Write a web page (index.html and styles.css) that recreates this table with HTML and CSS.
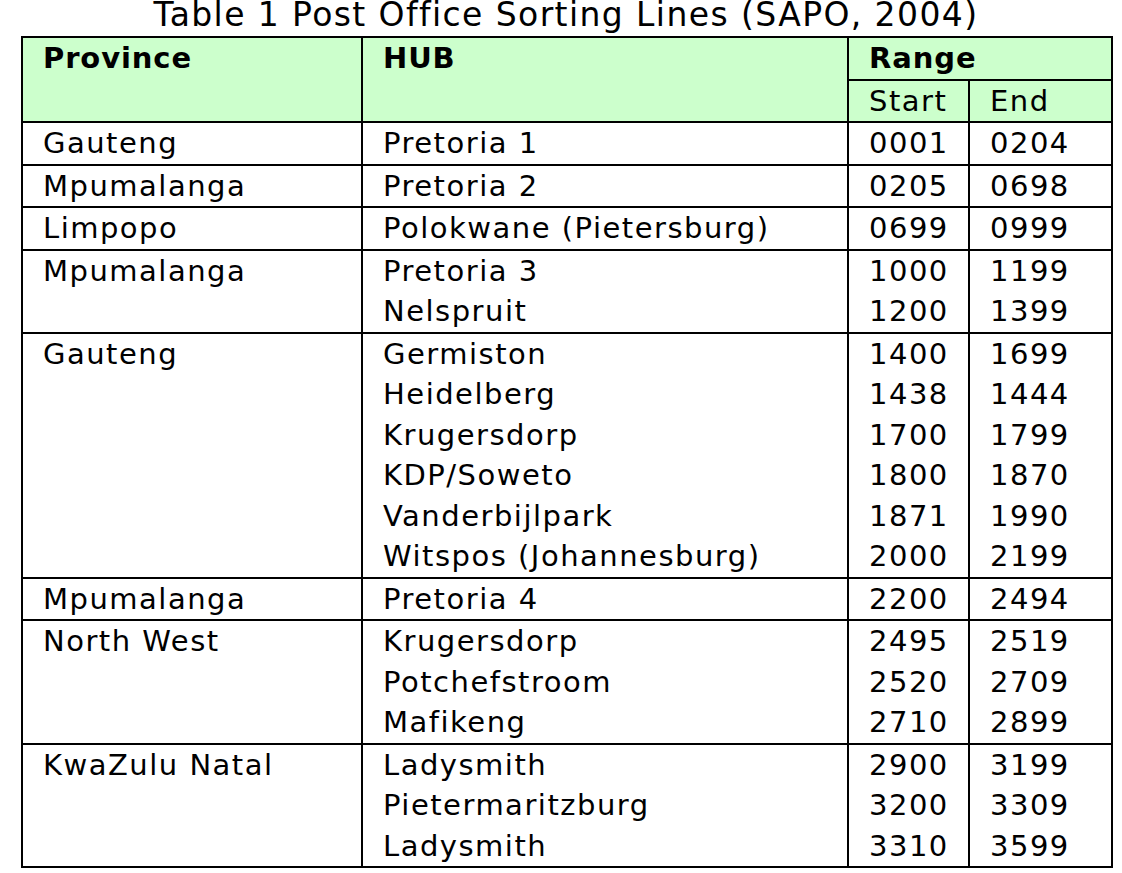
FILE: index.html
```html
<!DOCTYPE html>
<html>
<head>
<meta charset="utf-8">
<link rel="stylesheet" href="styles.css">
</head>
<body>
<h1 class="title">Table 1 Post Office Sorting Lines (SAPO, 2004)</h1>
<table class="lines">
  <colgroup>
    <col class="c-prov"><col class="c-hub"><col class="c-start"><col class="c-end">
  </colgroup>
  <thead>
    <tr>
      <th rowspan="2" class="hd">Province</th>
      <th rowspan="2" class="hd">HUB</th>
      <th colspan="2" class="hd range">Range</th>
    </tr>
    <tr>
      <th class="sub">Start</th>
      <th class="sub end">End</th>
    </tr>
  </thead>
  <tbody>
    <tr><td>Gauteng</td><td>Pretoria 1</td><td>0001</td><td class="end">0204</td></tr>
    <tr><td>Mpumalanga</td><td>Pretoria 2</td><td>0205</td><td class="end">0698</td></tr>
    <tr><td>Limpopo</td><td>Polokwane (Pietersburg)</td><td>0699</td><td class="end">0999</td></tr>
    <tr><td>Mpumalanga</td><td>Pretoria 3<br>Nelspruit</td><td>1000<br>1200</td><td class="end">1199<br>1399</td></tr>
    <tr><td>Gauteng</td><td>Germiston<br>Heidelberg<br>Krugersdorp<br>KDP/Soweto<br>Vanderbijlpark<br>Witspos (Johannesburg)</td><td>1400<br>1438<br>1700<br>1800<br>1871<br>2000</td><td class="end">1699<br>1444<br>1799<br>1870<br>1990<br>2199</td></tr>
    <tr><td>Mpumalanga</td><td>Pretoria 4</td><td>2200</td><td class="end">2494</td></tr>
    <tr><td>North West</td><td>Krugersdorp<br>Potchefstroom<br>Mafikeng</td><td>2495<br>2520<br>2710</td><td class="end">2519<br>2709<br>2899</td></tr>
    <tr><td>KwaZulu Natal</td><td>Ladysmith<br>Pietermaritzburg<br>Ladysmith</td><td>2900<br>3200<br>3310</td><td class="end">3199<br>3309<br>3599</td></tr>
  </tbody>
</table>
</body>
</html>
```

FILE: styles.css
```css
html, body {
  margin: 0;
  padding: 0;
  background: #ffffff;
}
body {
  font-family: "DejaVu Sans", sans-serif;
  color: #000;
  width: 1122px;
}
.title {
  margin: 0 0 6px 0;
  font-weight: normal;
  font-size: 33px;
  line-height: 30px;
  letter-spacing: 1.4px;
  text-align: center;
  padding-left: 10px;
}
.lines {
  border-collapse: collapse;
  margin-left: 21px;
  width: 1090px;
  table-layout: fixed;
  font-size: 29px;
  line-height: 40.5px;
  letter-spacing: 1.5px;
}
.c-prov { width: 340px; }
.c-hub { width: 486px; }
.c-start { width: 121px; }
.c-end { width: 143px; }
.lines th, .lines td {
  border: 2px solid #000;
  padding: 0 0 0 20px;
  text-align: left;
  vertical-align: top;
  white-space: nowrap;
}
.lines td.end, .lines th.end {
  border-left-width: 1px;
}
.lines thead th {
  background: #ccffcc;
}
.lines th.hd {
  font-weight: bold;
  letter-spacing: 0.9px;
}
.lines th.sub {
  font-weight: normal;
}
```
